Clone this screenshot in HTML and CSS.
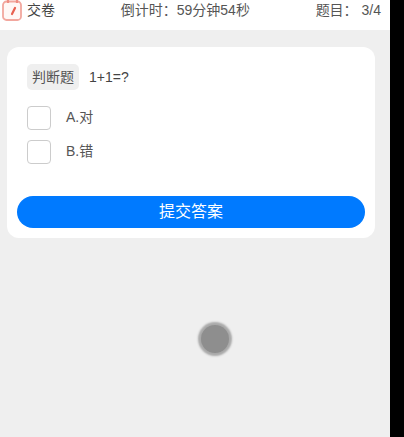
FILE: index.html
```html
<!DOCTYPE html>
<html lang="zh">

<head>
    <meta charset="UTF-8">
    <meta name="viewport" content="width=device-width, initial-scale=1.0">
    <title>答题</title>
    <link rel="stylesheet" href="styles.css">
</head>

<body>
    <div class="page">
        <div class="header">
            <div class="submit">
                <svg class="submit-icon" width="20" height="21" viewBox="0 0 20 21">
                    <rect x="1" y="1.5" width="18" height="18.5" rx="3.5" fill="#fff7f5" stroke="#f2a79e" stroke-width="1.8" />
                    <path d="M6 0 v3 M15 0 v3" stroke="#ee8d82" stroke-width="2.2" fill="none" />
                    <path d="M13 8 L10 14" stroke="#e8604f" stroke-width="2.2" stroke-linecap="round" fill="none" />
                </svg>
                <span>交卷</span>
            </div>
            <div class="timer">倒计时：59分钟54秒</div>
            <div class="count">题目： 3/4</div>
        </div>

        <div class="card">
            <div class="question">
                <span class="tag">判断题</span>
                <span class="title">1+1=?</span>
            </div>
            <div class="option">
                <span class="box"></span>
                <span class="option-text">A.对</span>
            </div>
            <div class="option">
                <span class="box"></span>
                <span class="option-text">B.错</span>
            </div>
            <button class="send">提交答案</button>
        </div>

        <div class="touch"></div>
    </div>
</body>

</html>
```

FILE: styles.css
```css
html,
body {
    margin: 0;
    height: 100%;
    background-color: #000;
}

.page {
    position: relative;
    width: 390px;
    height: 437px;
    overflow: hidden;
    background-color: #efefef;
    font-family: "Liberation Sans", "Noto Sans CJK SC", sans-serif;
    font-size: 14px;
    color: #555;
}

.header {
    display: flex;
    align-items: flex-start;
    justify-content: space-between;
    height: 30px;
    padding: 0 9px 0 2px;
    box-sizing: border-box;
    background-color: #fff;
    line-height: 20px;
}

.submit {
    display: flex;
    align-items: flex-start;
    gap: 5px;
    color: #444;
}

.card {
    margin: 17px 15px 0 7px;
    height: 191px;
    padding: 17px 10px 0;
    box-sizing: border-box;
    background-color: #fff;
    border-radius: 12px;
}

.question {
    display: flex;
    align-items: center;
    gap: 10px;
    padding-left: 10px;
    margin-bottom: 15px;
}

.tag {
    padding: 0 5px;
    line-height: 26px;
    border-radius: 5px;
    background-color: #efefef;
}

.title {
    color: #444;
}

.option {
    display: flex;
    align-items: center;
    gap: 15px;
    height: 26px;
    padding-left: 10px;
    margin-bottom: 8px;
}

.option-text {
    margin-bottom: 5px;
}

.box {
    width: 22px;
    height: 22px;
    border: 1px solid #ccc;
    border-radius: 4px;
    background-color: #fff;
}

.send {
    display: block;
    width: 348px;
    height: 32px;
    margin-top: 31px;
    padding: 0 0 4px;
    border: 0;
    border-radius: 16px;
    background-color: #007aff;
    color: #fff;
    font-family: inherit;
    font-size: 16px;
}

.touch {
    position: absolute;
    left: 201px;
    top: 325px;
    width: 28px;
    height: 28px;
    border-radius: 50%;
    background-color: #8e8e8e;
    box-shadow: 0 0 2px 3px #a9a9a9;
}
```
